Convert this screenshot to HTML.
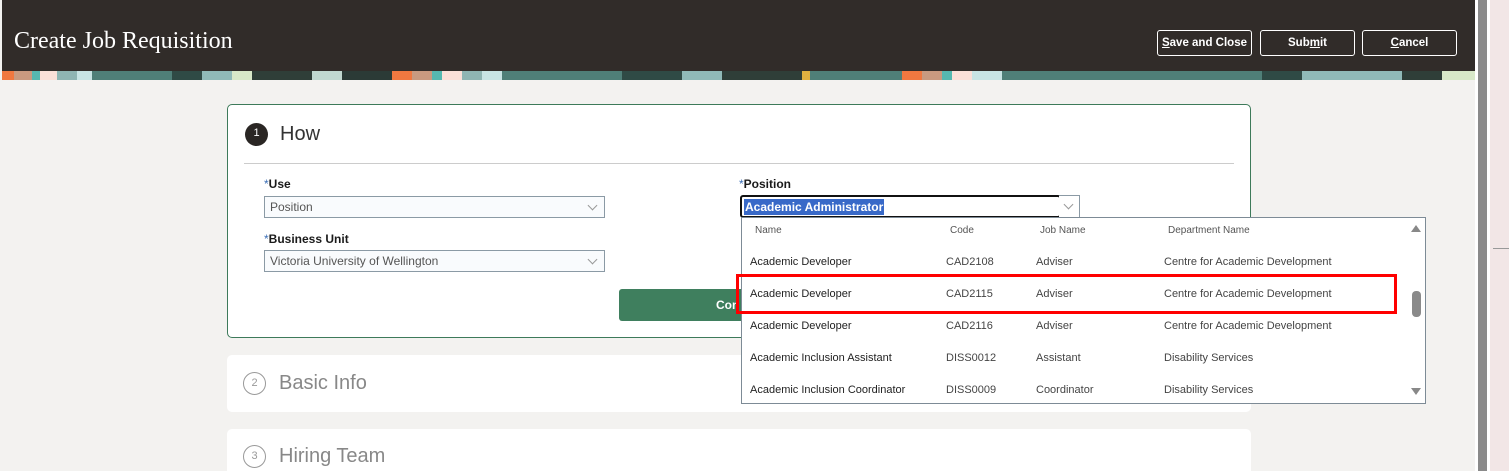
<!DOCTYPE html>
<html style="overflow:hidden;width:1509px;height:471px"><head><meta charset="utf-8"><style>
*{box-sizing:border-box;margin:0;padding:0}
body{width:1509px;height:471px;overflow:hidden;background:#f3f2f0;font-family:"Liberation Sans",sans-serif;position:relative}
.hdr{position:absolute;left:2px;top:0;width:1473px;height:71px;background:#312c29}
.hdr h1{position:absolute;left:12px;top:28px;font-family:"Liberation Serif",serif;font-weight:normal;font-size:24px;color:#fff}
.btn{position:absolute;top:30px;height:26px;border:1px solid #fff;border-radius:3px;color:#fff;font-size:11.5px;font-weight:bold;text-align:center;line-height:24px}
.banner{position:absolute;left:2px;top:71px;width:1473px;height:9px;background:linear-gradient(90deg,#f07840 0 12px,#c99a80 12px 30px,#55b8b0 30px 38px,#fbe0d8 38px 55px,#8fb5b3 55px 75px,#c8e4e4 75px 90px,#4f7f78 90px 170px,#2f4a45 170px 200px,#90bab8 200px 230px,#d8e8c8 230px 250px,#2f3e38 250px 310px,#c0d8d0 310px 340px,#2b3a36 340px 390px,#f07840 390px 410px,#c99a80 410px 430px,#55b8b0 430px 440px,#fbe0d8 440px 460px,#8fb5b3 460px 480px,#c8e4e4 480px 500px,#4f7f78 500px 620px,#2f4a45 620px 680px,#90bab8 680px 720px,#2f3e38 720px 800px,#e0b040 800px 808px,#4f7f78 808px 900px,#f07840 900px 920px,#c99a80 920px 940px,#55b8b0 940px 950px,#fbe0d8 950px 970px,#c8e4e4 970px 1000px,#4f7f78 1000px 1260px,#2f4a45 1260px 1300px,#90bab8 1300px 1400px,#2f3e38 1400px 1440px,#d8e8c8 1440px)}
.rs1{position:absolute;left:1475px;top:0;width:3px;height:471px;background:#fff}
.rs2{position:absolute;left:1478px;top:0;width:9px;height:471px;background:#8a8a8a}
.rs3{position:absolute;left:1487px;top:0;width:3px;height:471px;background:#fff}
.rs4{position:absolute;left:1490px;top:0;width:19px;height:471px;background:#f2e6e6}
.card{position:absolute;left:227px;width:1024px;background:#fff;border-radius:5px}
.c1{top:104px;height:234px;border:1px solid #3d7a5a}
.num{position:absolute;width:23px;height:23px;border-radius:50%;font-size:11px;text-align:center;line-height:21px}
.title{position:absolute;font-size:20px;font-weight:300}
.lbl{position:absolute;font-size:12px;font-weight:bold;color:#1a1a1a}
.lbl b{color:#3b6fb6;font-weight:normal}
.inp{position:absolute;height:22px;border:1px solid #8b9aa5;background:#f9fbfd;font-size:12px;color:#555;padding-left:5px;line-height:20px}
.chev{position:absolute;right:8px;top:5px;width:7px;height:7px;border-right:1px solid #999;border-bottom:1px solid #999;transform:rotate(45deg)}
.dd{position:absolute;left:741px;top:217px;width:685px;height:187px;background:#fff;border:1px solid #7d8b96;font-size:11px;color:#444}
.dd .h{position:absolute;top:7px;font-size:10px;color:#555}
.row{position:absolute;left:0;width:660px;height:32px}
.row span{position:absolute;top:0;line-height:34px}
</style></head><body>
<div class="hdr"><h1>Create Job Requisition</h1>
<div class="btn" style="left:1155px;width:95px"><u>S</u>ave and Close</div>
<div class="btn" style="left:1258px;width:95px">Sub<u>m</u>it</div>
<div class="btn" style="left:1360px;width:95px"><u>C</u>ancel</div>
</div>
<div class="banner"></div>
<div class="rs1"></div><div class="rs2"></div><div class="rs3"></div><div class="rs4"></div>
<div style="position:absolute;left:1493px;top:248px;width:16px;height:1px;background:#999"></div>

<div class="card c1">
 <div class="num" style="left:17px;top:18px;background:#2a2624;color:#fff">1</div>
 <div class="title" style="left:52px;top:18px;color:#333">How</div>
 <div style="position:absolute;left:16px;top:58px;width:990px;height:1px;background:#ccc"></div>
 <div class="lbl" style="left:36px;top:72px"><b>*</b>Use</div>
 <div class="inp" style="left:36px;top:91px;width:341px">Position<i class="chev"></i></div>
 <div class="lbl" style="left:36px;top:127px"><b>*</b>Business Unit</div>
 <div class="inp" style="left:36px;top:145px;width:341px">Victoria University of Wellington<i class="chev"></i></div>
 <div style="position:absolute;left:391px;top:184px;width:130px;height:32px;background:#3f7f5e;border-radius:3px;color:#fff;font-size:12px;font-weight:bold;line-height:32px;padding-left:97px">Con</div>
 <div class="lbl" style="left:511px;top:72px"><b>*</b>Position</div>
 <div style="position:absolute;left:512px;top:90px;width:321px;height:23px;border:2px solid #111;border-radius:3px;background:#fff"><span style="position:absolute;left:2px;top:2px;background:#3869c8;color:#fff;font-size:12px;font-weight:bold;padding:1px 1px;line-height:14px">Academic Administrator</span></div>
 <div style="position:absolute;left:831px;top:90px;width:21px;height:23px;border:1px solid #8b9aa5;border-left:none;background:#fff"><i class="chev" style="right:7px"></i></div>
</div>

<div class="card" style="top:355px;height:57px">
 <div class="num" style="left:16px;top:17px;border:1px solid #999;color:#999">2</div>
 <div class="title" style="left:52px;top:17px;color:#888">Basic Info</div>
</div>
<div class="card" style="top:429px;height:42px;border-radius:5px 5px 0 0">
 <div class="num" style="left:16px;top:16px;border:1px solid #999;color:#999">3</div>
 <div class="title" style="left:52px;top:16px;color:#888">Hiring Team</div>
</div>

<div class="dd">
 <span class="h" style="left:13px">Name</span>
 <span class="h" style="left:208px">Code</span>
 <span class="h" style="left:298px">Job Name</span>
 <span class="h" style="left:426px">Department Name</span>
 <div class="row" style="top:27px"><span style="left:8px;color:#222">Academic Developer</span><span style="left:204px">CAD2108</span><span style="left:294px">Adviser</span><span style="left:422px">Centre for Academic Development</span></div>
 <div class="row" style="top:59px"><span style="left:8px;color:#222">Academic Developer</span><span style="left:204px">CAD2115</span><span style="left:294px">Adviser</span><span style="left:422px">Centre for Academic Development</span></div>
 <div class="row" style="top:91px"><span style="left:8px;color:#222">Academic Developer</span><span style="left:204px">CAD2116</span><span style="left:294px">Adviser</span><span style="left:422px">Centre for Academic Development</span></div>
 <div class="row" style="top:123px"><span style="left:8px;color:#222">Academic Inclusion Assistant</span><span style="left:204px">DISS0012</span><span style="left:294px">Assistant</span><span style="left:422px">Disability Services</span></div>
 <div class="row" style="top:155px"><span style="left:8px;color:#222">Academic Inclusion Coordinator</span><span style="left:204px">DISS0009</span><span style="left:294px">Coordinator</span><span style="left:422px">Disability Services</span></div>
 <div style="position:absolute;left:669px;top:7px;width:0;height:0;border-left:5px solid transparent;border-right:5px solid transparent;border-bottom:7px solid #888"></div>
 <div style="position:absolute;left:670px;top:73px;width:9px;height:26px;border-radius:4px;background:#8a8a8a"></div>
 <div style="position:absolute;left:669px;top:170px;width:0;height:0;border-left:5px solid transparent;border-right:5px solid transparent;border-top:7px solid #888"></div>
</div>
<div style="position:absolute;left:736px;top:274px;width:661px;height:40px;border:3px solid #f00"></div>
</body></html>
